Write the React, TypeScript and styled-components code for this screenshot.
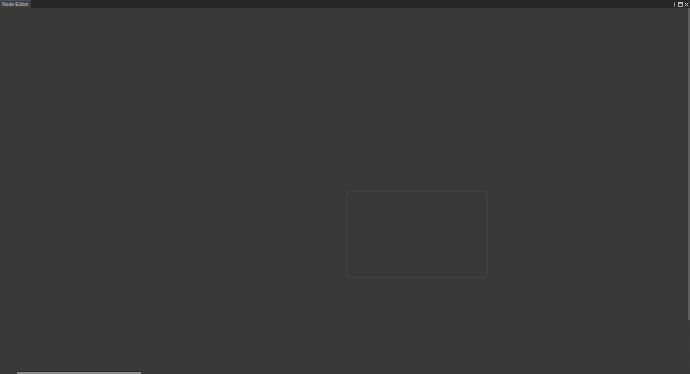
import React from "react";
import styled, { createGlobalStyle } from "styled-components";

const Global = createGlobalStyle`
  html, body { margin: 0; padding: 0; width: 100%; height: 100%; overflow: hidden; background: #383838; }
  #root { width: 100%; height: 100%; }
  * { box-sizing: border-box; }
`;

const Window = styled.div`
  display: flex;
  flex-direction: column;
  width: 690px;
  height: 374px;
  background: #383838;
  font-family: "Liberation Sans", Arial, sans-serif;
`;

const TabBar = styled.div`
  display: flex;
  align-items: flex-end;
  height: 8px;
  flex: 0 0 8px;
  background: #262626;
`;

const Tab = styled.div`
  display: flex;
  align-items: center;
  height: 8px;
  width: 31px;
  padding-left: 2px;
  background: #3d3d3d;
  border-top: 1px solid #3f5468;
  color: #d0d0d0;
  font-size: 5px;
  line-height: 7px;
  white-space: nowrap;
`;

const Spacer = styled.div`
  flex: 1;
`;

const Controls = styled.div`
  display: flex;
  align-items: center;
  gap: 1px;
  height: 8px;
  padding-right: 1px;
`;

const CtrlIcon = styled.svg`
  display: block;
  width: 5px;
  height: 5px;
`;

const Canvas = styled.div`
  position: relative;
  flex: 1;
  background-color: #383838;
  background-image:
    radial-gradient(circle, rgba(70, 70, 70, 0.35) 0.5px, transparent 0.6px);
  background-size: 3px 3px;
  overflow: hidden;
`;

const Node = styled.div`
  position: absolute;
  border: 1px solid #444444;
  border-radius: 4px;
`;

const VScroll = styled.div`
  position: absolute;
  right: 0;
  top: 0;
  width: 2px;
  height: 312px;
  background: #5e5e5e;
`;

const HScroll = styled.div`
  position: absolute;
  bottom: 0;
  left: 17px;
  width: 124px;
  height: 3px;
  background: #8a8a8a;
  border-top: 1px solid #2a2a2a;
`;

export default function App() {
  return (
    <>
      <Global />
      <Window>
        <TabBar>
          <Tab>Node Editor</Tab>
          <Spacer />
          <Controls>
            <CtrlIcon viewBox="0 0 5 5">
              <rect x="2" y="0.5" width="1" height="1" fill="#cfcfcf" />
              <rect x="2" y="2" width="1" height="1" fill="#cfcfcf" />
              <rect x="2" y="3.5" width="1" height="1" fill="#cfcfcf" />
            </CtrlIcon>
            <CtrlIcon viewBox="0 0 5 5">
              <rect x="0.5" y="0.5" width="4" height="4" fill="none" stroke="#cfcfcf" strokeWidth="0.8" />
              <rect x="0.5" y="0.5" width="4" height="1.2" fill="#cfcfcf" />
            </CtrlIcon>
            <CtrlIcon viewBox="0 0 5 5">
              <path d="M0.7 0.7 L4.3 4.3 M4.3 0.7 L0.7 4.3" stroke="#cfcfcf" strokeWidth="0.9" />
            </CtrlIcon>
          </Controls>
        </TabBar>
        <Canvas>
          <Node style={{ left: 346, top: 183, width: 142, height: 87 }} />
          <VScroll />
          <HScroll />
        </Canvas>
      </Window>
    </>
  );
}
